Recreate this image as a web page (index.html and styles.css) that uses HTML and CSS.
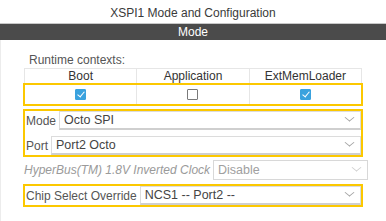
FILE: index.html
```html
<!DOCTYPE html>
<html lang="en">
<head>
  <meta charset="UTF-8" />
  <meta name="viewport" content="width=device-width, initial-scale=1.0" />
  <title>XSPI1 Mode and Configuration</title>
  <link rel="stylesheet" href="styles.css">
</head>
<body>
  <div class="panel">
    <div class="title">XSPI1 Mode and Configuration</div>
    <div class="bar">Mode</div>

    <div class="content">
      <div class="caption">Runtime contexts:</div>

      <div class="contexts">
        <div class="ctx-row head">
          <div class="cell">Boot</div>
          <div class="cell">Application</div>
          <div class="cell">ExtMemLoader</div>
        </div>
        <div class="ctx-row checks marked">
          <div class="cell"><span class="check on"></span></div>
          <div class="cell"><span class="check"></span></div>
          <div class="cell"><span class="check on"></span></div>
        </div>
      </div>

      <div class="group marked">
        <div class="field">
          <span class="label">Mode</span>
          <div class="select">Octo SPI<span class="chevron"></span></div>
        </div>
        <div class="field">
          <span class="label">Port</span>
          <div class="select">Port2 Octo<span class="chevron"></span></div>
        </div>
      </div>

      <div class="field disabled">
        <span class="label">HyperBus(TM) 1.8V Inverted Clock</span>
        <div class="select">Disable<span class="chevron"></span></div>
      </div>

      <div class="group marked single">
        <div class="field">
          <span class="label">Chip Select Override</span>
          <div class="select">NCS1 -- Port2 --<span class="chevron"></span></div>
        </div>
      </div>
    </div>
  </div>
</body>
</html>
```

FILE: styles.css
```css
body {
  margin: 0;
  background-color: #fff;
  font-family: "Liberation Sans", Arial, sans-serif;
  font-size: 12px;
  color: #444;
}

.panel {
  width: 386px;
  height: 221px;
  overflow: hidden;
}

.title {
  height: 23px;
  line-height: 26px;
  text-align: center;
  color: #3a3a3a;
  border-bottom: 1px solid #c8c8c8;
}

.bar {
  height: 16px;
  line-height: 16px;
  text-align: center;
  background-color: #4b4b4b;
  color: #fff;
}

.content {
  height: 181px;
  padding: 12px 23px 0 22px;
  border-left: 1px solid #ececec;
  margin-left: 0;
  box-sizing: border-box;
}

.caption {
  padding-left: 6px;
  height: 16px;
  line-height: 16px;
  color: #555;
}

.ctx-row {
  display: flex;
}

.ctx-row .cell {
  flex: 1;
  display: flex;
  justify-content: center;
  align-items: center;
  color: #333;
}

.ctx-row.head {
  border: 1px solid #e6e6e6;
  border-bottom: none;
  height: 14px;
  margin: 0 1px;
}

.ctx-row.head .cell + .cell,
.ctx-row.checks .cell + .cell {
  border-left: 1px solid #e6e6e6;
}

.ctx-row.checks {
  height: 19px;
}

.marked {
  border: 2px solid #fcc800;
}

.check {
  width: 9px;
  height: 9px;
  border: 1px solid #7a7a7a;
  border-radius: 1px;
  background-color: #fff;
  position: relative;
}

.check.on {
  border-color: #3aa2de;
  background-color: #3aa2de;
}

.check.on::after {
  content: "";
  position: absolute;
  left: 3px;
  top: 0px;
  width: 3px;
  height: 6px;
  border-right: 1.5px solid #fff;
  border-bottom: 1.5px solid #fff;
  transform: rotate(40deg);
}

.group {
  margin-top: 3px;
}

.group .field + .field {
  margin-top: 6px;
}

.field {
  display: flex;
  align-items: center;
  height: 19px;
}

.label {
  padding-left: 1px;
  padding-right: 3px;
  color: #555;
  white-space: nowrap;
}

.select {
  flex: 1;
  position: relative;
  height: 16px;
  line-height: 17px;
  padding-left: 4px;
  border: 1px solid #dcdcdc;
  border-bottom: 2px solid #cfcfcf;
  color: #444;
  font-size: 12.5px;
  white-space: nowrap;
}

.chevron {
  position: absolute;
  right: 7px;
  top: 2px;
  width: 6px;
  height: 6px;
  border-right: 1px solid #a3a3a3;
  border-bottom: 1px solid #a3a3a3;
  transform: scaleY(0.8) rotate(45deg);
}

.disabled {
  margin-top: 2px;
  margin-right: -5px;
  height: 21px;
}

.disabled .label {
  font-style: italic;
  color: #9a9a9a;
}

.disabled .select {
  height: 18px;
  line-height: 19px;
  color: #a0a0a0;
  border-color: #d8d8d8;
  border-bottom-width: 1px;
}

.disabled .chevron {
  top: 3px;
  border-color: #d0d0d0;
}

.single {
  margin-top: 4px;
}
```
